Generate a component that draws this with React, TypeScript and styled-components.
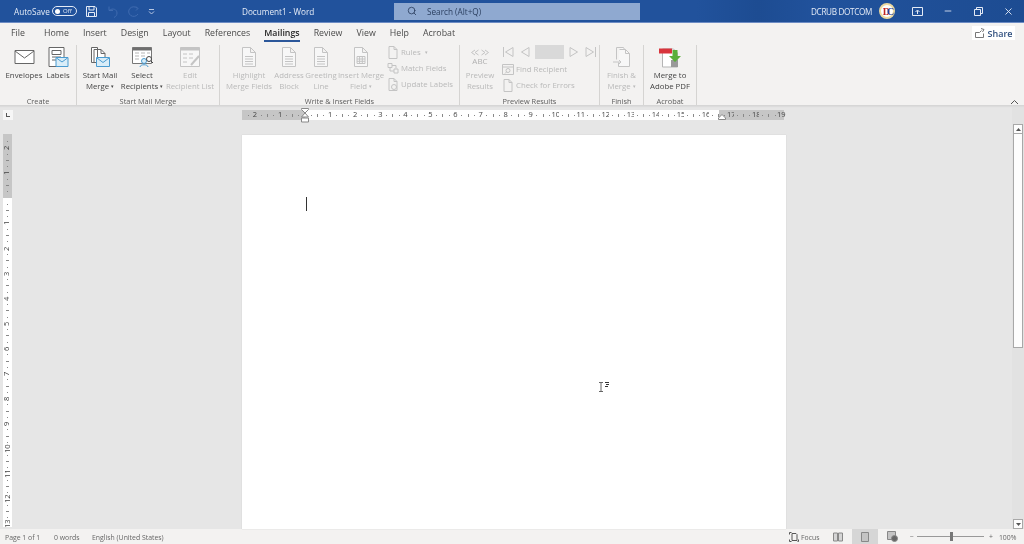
import React from "react";
import styled, { createGlobalStyle } from "styled-components";
import { Minus, Search, X } from "lucide-react";

const GlobalStyle = createGlobalStyle`
  html, body {
    margin: 0;
    padding: 0;
    overflow: hidden;
  }
  body {
    font-family: "Open Sans", "Noto Sans", sans-serif;
    color: #444;
  }
`;

const Window = styled.div`
  display: flex;
  flex-direction: column;
  width: 1024px;
  height: 544px;
  overflow: hidden;
  background: #e6e6e6;
  filter: blur(0.35px);
`;

/* title bar */

const TitleBar = styled.div`
  display: flex;
  align-items: center;
  flex: none;
  height: 22px;
  padding-left: 14px;
  border-bottom: 1px solid #6d8cc4;
  background: linear-gradient(90deg, #21529c 0%, #21529c 68%, #1d4c92 74%, #21529c 80%, #1d4c92 100%);
  color: #e4ebf6;
  font-size: 8.2px;
`;

const AutoSave = styled.span`
  width: 38px;
`;

const Toggle = styled.div`
  display: flex;
  align-items: center;
  gap: 3px;
  box-sizing: border-box;
  width: 25px;
  height: 10px;
  padding-left: 2px;
  border: 1px solid #e4ebf6;
  border-radius: 5px;
  font-size: 6px;

  i {
    width: 5px;
    height: 5px;
    border-radius: 50%;
    background: #fff;
  }
`;

const QuickIcons = styled.div`
  display: flex;
  align-items: center;
  width: 157px;
  margin-left: 8px;
  gap: 8px;
`;

const DocTitle = styled.span`
  width: 152px;
`;

const SearchBox = styled.div`
  display: flex;
  align-items: center;
  gap: 10px;
  box-sizing: border-box;
  width: 246px;
  height: 17px;
  padding-left: 13px;
  background: #8fa9d0;
  color: #2b3f5f;
`;

const Account = styled.div`
  width: 68px;
  margin-left: 171px;
  letter-spacing: -0.35px;
`;

const Avatar = styled.div`
  display: flex;
  align-items: center;
  justify-content: center;
  flex: none;
  box-sizing: border-box;
  width: 16px;
  height: 16px;
  border: 2px solid #ecd9a0;
  border-radius: 50%;
  background: #fff;
  color: #c0241f;
  font-family: "Liberation Serif", serif;
  font-size: 10px;
  font-weight: 700;
  letter-spacing: -3px;

  b {
    color: #1d3f9c;
  }
`;

const WindowControls = styled.div`
  display: flex;
  align-items: center;
  margin-left: 7px;
`;

const WindowControl = styled.div`
  display: flex;
  align-items: center;
  justify-content: center;
  width: 30.5px;
  color: #e4ebf6;
`;

/* tabs */

const TabBar = styled.div`
  display: flex;
  align-items: center;
  flex: none;
  gap: 14.1px;
  height: 20px;
  padding-left: 11px;
  background: #f3f2f1;
  font-size: 8.8px;
`;

const Tab = styled.span<{ $active?: boolean }>`
  position: relative;
  color: ${(p) => (p.$active ? "#262626" : "#4a4a4a")};
  font-weight: ${(p) => (p.$active ? 600 : 400)};

  &:first-child {
    margin-right: 5px;
  }

  &::after {
    content: "";
    display: ${(p) => (p.$active ? "block" : "none")};
    position: absolute;
    left: 0;
    right: 0;
    bottom: -3px;
    height: 2px;
    background: #2b579a;
  }
`;

const ShareButton = styled.div`
  display: flex;
  align-items: center;
  justify-content: center;
  gap: 3px;
  width: 43px;
  height: 14px;
  margin-left: auto;
  margin-right: 9px;
  background: #fff;
  color: #2f4f7f;
  font-size: 9px;
  font-weight: 600;
`;

/* ribbon */

const Ribbon = styled.div`
  position: relative;
  display: flex;
  flex: none;
  box-sizing: border-box;
  height: 63px;
  padding-top: 2px;
  border-bottom: 1px solid #d6d6d6;
  background: #f3f2f1;
  box-shadow: 0 1px 1px #dcdcdc;
`;

const Group = styled.div<{ $w: number }>`
  display: flex;
  flex-direction: column;
  box-sizing: border-box;
  width: ${(p) => p.$w}px;
  border-right: 1px solid #d5d4d2;
`;

const GroupBody = styled.div<{ $pad?: number }>`
  display: flex;
  flex: 1;
  min-height: 0;
  padding-left: ${(p) => p.$pad ?? 0}px;
`;

const GroupLabel = styled.div`
  height: 8px;
  text-align: center;
  color: #5c5c5c;
  font-size: 7.4px;
  line-height: 8px;
`;

const BigButton = styled.div<{ $w: number; $off?: boolean }>`
  display: flex;
  flex-direction: column;
  align-items: center;
  flex: none;
  width: ${(p) => p.$w}px;
  padding-top: 1px;
  color: ${(p) => (p.$off ? "#b9b9b9" : "#444")};
  font-size: 7.8px;
  line-height: 11px;
  text-align: center;
  white-space: nowrap;

  svg {
    display: block;
    height: 22px;
    margin-bottom: 2px;
  }
`;

const Caret = styled.span`
  display: inline-block;
  margin-left: 2px;
  font-size: 5px;
  vertical-align: 1px;
`;

const SmallColumn = styled.div<{ $indent?: number }>`
  display: flex;
  flex-direction: column;
  margin-top: -1px;
  margin-left: 3px;

  > div:not(:first-child) {
    padding-left: ${(p) => p.$indent ?? 0}px;
  }
`;

const SmallItem = styled.div`
  display: flex;
  align-items: center;
  gap: 2px;
  height: 16px;
  color: #b9b9b9;
  font-size: 7.8px;
  white-space: nowrap;
`;

const NavRow = styled.div`
  display: flex;
  align-items: center;
  gap: 5px;
  height: 15px;
  margin-bottom: 2px;
  margin-left: 3px;
`;

const NavField = styled.div`
  width: 29px;
  height: 14px;
  background: #d9d9d9;
`;

const PreviewGlyph = styled.div`
  display: flex;
  flex-direction: column;
  align-items: center;
  box-sizing: border-box;
  height: 24px;
  padding-top: 3px;
  color: #b0b0b0;
  font-size: 8px;
  line-height: 9px;

  svg {
    height: 7px;
    margin: 0;
  }
`;

const Collapse = styled.div`
  position: absolute;
  right: 5px;
  bottom: 0;
  line-height: 0;
`;

/* workspace */

const Workspace = styled.div`
  display: flex;
  flex: 1;
  min-height: 0;
`;

const LeftRail = styled.div`
  display: flex;
  flex-direction: column;
  flex: none;
  box-sizing: border-box;
  width: 16px;
  padding-left: 3px;
`;

const TabStop = styled.div`
  display: flex;
  align-items: center;
  justify-content: center;
  width: 10px;
  height: 10px;
  margin-top: 4px;
  margin-bottom: 14px;
  background: #f6f6f6;

  &::before {
    content: "";
    width: 3px;
    height: 3px;
    border-left: 1px solid #555;
    border-bottom: 1px solid #555;
  }
`;

const VerticalRuler = styled.div`
  display: flex;
  flex-direction: column;
  width: 9px;
  overflow: hidden;
`;

const RulerLead = styled.div<{ $size: number; $vertical?: boolean }>`
  flex: none;
  width: ${(p) => (p.$vertical ? "9px" : `${p.$size}px`)};
  height: ${(p) => (p.$vertical ? `${p.$size}px` : "10px")};
  background: #c6c6c6;
`;

const Center = styled.div`
  display: flex;
  flex-direction: column;
  flex: 1;
  min-width: 0;
  padding-left: 226px;
`;

const HorizontalRuler = styled.div`
  position: relative;
  display: flex;
  flex: none;
  width: 544px;
  height: 10px;
  margin-top: 4px;
`;

type Tone = "margin" | "text" | "start" | "end";

const toneBackground = (tone: Tone, vertical?: boolean) => {
  const grey = "#c6c6c6";
  if (tone === "margin") return grey;
  if (tone === "text") return "#fff";
  const dir = vertical ? "180deg" : "90deg";
  return tone === "start"
    ? `linear-gradient(${dir}, ${grey} 50%, #fff 50%)`
    : `linear-gradient(${dir}, #fff 50%, ${grey} 50%)`;
};

const Slot = styled.div<{ $tone: Tone; $vertical?: boolean }>`
  display: flex;
  align-items: center;
  justify-content: center;
  flex: none;
  width: ${(p) => (p.$vertical ? "9px" : "6.28px")};
  height: ${(p) => (p.$vertical ? "6.28px" : "10px")};
  background: ${(p) => toneBackground(p.$tone, p.$vertical)};
  color: #444;
  font-size: 7.5px;
  line-height: 1;
`;

const SlotLabel = styled.span<{ $vertical?: boolean }>`
  white-space: nowrap;
  transform: ${(p) => (p.$vertical ? "rotate(-90deg)" : "none")};
`;

const Dot = styled.i`
  width: 1px;
  height: 1px;
  background: #888;
`;

const Tick = styled.i<{ $vertical?: boolean }>`
  width: ${(p) => (p.$vertical ? "3px" : "1px")};
  height: ${(p) => (p.$vertical ? "1px" : "3px")};
  background: #888;
`;

const IndentMarker = styled.svg<{ $left: number; $top: number }>`
  position: absolute;
  left: ${(p) => p.$left}px;
  top: ${(p) => p.$top}px;
`;

const Page = styled.div`
  position: relative;
  flex: 1;
  box-sizing: border-box;
  width: 544px;
  margin-top: 15px;
  padding: 62px 0 0 64px;
  background: #fff;
  box-shadow: 0 0 1px #c4c4c4;
`;

const TextCaret = styled.div`
  width: 1px;
  height: 14px;
  background: #333;
`;

const MouseCursor = styled.svg`
  position: absolute;
  left: 355px;
  top: 246px;
`;

const ScrollBar = styled.div`
  display: flex;
  flex-direction: column;
  flex: none;
  box-sizing: border-box;
  width: 12px;
  padding: 18px 1px 0;
  background: #e2e2e2;
`;

const ScrollButton = styled.div`
  display: flex;
  align-items: center;
  justify-content: center;
  flex: none;
  box-sizing: border-box;
  height: 10px;
  border: 1px solid #a8a8a8;
  background: #fdfdfd;
`;

const ScrollThumb = styled.div`
  flex: none;
  box-sizing: border-box;
  height: 214px;
  border: 1px solid #a8a8a8;
  border-top: none;
  background: #fdfdfd;
`;

const ScrollTrack = styled.div`
  flex: 1;
`;

/* status bar */

const StatusBar = styled.div`
  display: flex;
  align-items: center;
  flex: none;
  box-sizing: border-box;
  height: 15px;
  padding-left: 5px;
  background: #f3f2f1;
  color: #666;
  font-size: 6.9px;
`;

const StatusText = styled.span<{ $w: number }>`
  width: ${(p) => p.$w}px;
  padding-top: 1px;
  white-space: nowrap;
`;

const FocusLabel = styled.span`
  display: flex;
  align-items: center;
  gap: 2px;
  width: 35px;
  padding-top: 1px;
`;

const ViewButton = styled.div<{ $active?: boolean; $w: number }>`
  display: flex;
  align-items: center;
  justify-content: center;
  height: 15px;
  width: ${(p) => p.$w}px;
  background: ${(p) => (p.$active ? "#d6d6d6" : "transparent")};
`;

const ZoomMinus = styled.span`
  margin-left: 4px;
`;

const ZoomSlider = styled.div`
  position: relative;
  width: 67px;
  height: 1px;
  margin: 0 5px 0 3px;
  background: #999;

  &::after {
    content: "";
    position: absolute;
    left: 33px;
    top: -4px;
    width: 3px;
    height: 9px;
    background: #777;
  }
`;

const ZoomValue = styled.span`
  margin-left: 6px;
  padding-top: 1px;
`;

/* icons */

const off = "#c4c4c4";
const blue = "#4a9bd0";

const Doc = () => (
  <svg viewBox="0 0 18 22" width="18" height="22" fill="none" stroke={off}>
    <path d="M2.500 1.500h8l5 5v14h-13zM10.500 1.500v5h5" fill="#f7f7f7" />
    <path d="M5 10.500h8M5 13h8M5 15.500h8M5 18h8" />
  </svg>
);

const EnvelopeIcon = () => (
  <svg viewBox="0 0 24 22" width="24" height="22" fill="none" stroke="#666">
    <path d="M3 4.500h19v13H3z" fill="#fff" />
    <path d="M3 5l9.500 7L22 5" />
  </svg>
);

const LabelsIcon = () => (
  <svg viewBox="0 0 22 22" width="22" height="22" fill="none" stroke="#666">
    <path d="M2 1.500h15v19H2z" fill="#fff" />
    <path d="M5 4.500h9v4H5zM5 11h9M5 14h5" />
    <path d="M9 11.500h12v9H9z" fill="#d9edf8" stroke={blue} />
    <path d="M9.500 12l5.500 4 5.500-4" stroke={blue} />
  </svg>
);

const StartMergeIcon = () => (
  <svg viewBox="0 0 22 22" width="22" height="22" fill="none" stroke="#666">
    <path d="M2.500 1.500h6v15h-6zM5 3.500h7l4 4v9H5z" fill="#fff" />
    <path d="M12 3.500v4h4" />
    <path d="M7.500 11.500h13v9h-13z" fill="#d9edf8" stroke={blue} />
    <path d="M8 12l6 4.500 6-4.500" stroke={blue} />
  </svg>
);

const SelectRecipientsIcon = () => (
  <svg viewBox="0 0 24 22" width="24" height="22" fill="none" stroke="#777">
    <path d="M2.500 1.500h19v16h-19z" fill="#fff" />
    <path d="M2.500 2h19v2h-19z" fill="#666" />
    <path d="M5 7h4M11 7h4M17 7h3M5 10h4M11 10h4M5 13h4" stroke="#b5b5b5" />
    <circle cx="14" cy="15" r="2.500" fill="#d9edf8" stroke={blue} />
    <path d="M10 21c0-3 8-3 8 0" stroke={blue} />
    <circle cx="19" cy="13" r="2.500" fill="#fff" stroke="#444" />
    <path d="M21 15l2 2" stroke="#444" />
  </svg>
);

const EditListIcon = () => (
  <svg viewBox="0 0 22 22" width="22" height="22" fill="none" stroke={off}>
    <path d="M1.500 1.500h19v19h-19z" fill="#f7f7f7" />
    <path d="M1.500 2h19v2h-19z" fill={off} />
    <path d="M4 8h4M10 8h4M4 12h4M10 12h4M4 16h4" />
    <path d="M12 19l8-9" strokeWidth="2" />
  </svg>
);

const InsertFieldIcon = () => (
  <svg viewBox="0 0 18 22" width="18" height="22" fill="none" stroke={off}>
    <path d="M2.500 1.500h8l5 5v14h-13zM10.500 1.500v5h5" fill="#f7f7f7" />
    <path d="M5 10.500h8v7H5zM5 13h8M5 15.300h8M7.600 10.500v7M10.300 10.500v7" />
  </svg>
);

const SmallDoc = () => (
  <svg viewBox="0 0 12 13" width="12" height="13" fill="none" stroke={off}>
    <path d="M2 .5h5l3 3v9H2zM7 .5v3h3" />
  </svg>
);

const MatchIcon = () => (
  <svg viewBox="0 0 12 13" width="12" height="13" fill="none" stroke={off}>
    <path d="M1 1.500h4v4H1zM7 7h4v4H7zM5 3.500h4v3M7 9H3V5.500" />
  </svg>
);

const UpdateIcon = () => (
  <svg viewBox="0 0 12 13" width="12" height="13" fill="none" stroke={off}>
    <path d="M2 .5h5l3 3v9H2zM7 .5v3h3" />
    <circle cx="7" cy="9" r="2.500" fill="#f3f2f1" />
  </svg>
);

const FindIcon = () => (
  <svg viewBox="0 0 12 13" width="12" height="13" fill="none" stroke={off}>
    <path d="M.5 1.500h11v10H.5zM.5 4h11" />
    <circle cx="6" cy="7.500" r="2" />
    <path d="M4.500 9L3 10.500" />
  </svg>
);

const PreviewArrows = () => (
  <svg viewBox="0 0 20 7" width="20" height="7" fill="none" stroke={off}>
    <path d="M5 1L1.500 3.500 5 6M8.500 1L5 3.500 8.500 6M11.500 1L15 3.500 11.500 6M15 1l3.500 2.500L15 6" />
  </svg>
);

const NavArrow = ({ d, w = 11 }: { d: string; w?: number }) => (
  <svg viewBox={`0 0 ${w} 12`} width={w} height="12" fill="none" stroke={off}>
    <path d={d} />
  </svg>
);

const FinishIcon = () => (
  <svg viewBox="0 0 20 22" width="20" height="22" fill="none" stroke={off}>
    <path d="M4.500 1.500h7l1 2M7.500 3.500h6l4 4v13h-11v-4" fill="#f7f7f7" />
    <path d="M4.500 1.500v12M13.500 3.500v4h4M1 16h8M7 14l2 2-2 2" />
  </svg>
);

const AdobeIcon = () => (
  <svg viewBox="0 0 24 22" width="24" height="22">
    <path d="M4.500 3h11l4 4v14h-15z" fill="#fff" stroke="#b5b5b5" />
    <path d="M1 2.500h13v5H1z" fill="#d8343c" />
    <path d="M13 14h7v7h-7z" fill="#9a9a9a" />
    <path d="M14.500 4h5v6h3.500l-6 6-6-6h3.500z" fill="#5aaf3a" />
  </svg>
);

const SaveIcon = () => (
  <svg viewBox="0 0 13 13" width="13" height="13" fill="none" stroke="#e4ebf6">
    <path d="M1.500 1.500h8.500l1.500 1.500v8.500h-10zM4 1.500v3.500h5v-3.500M3.500 11.500v-4h6v4" />
  </svg>
);

const UndoIcon = () => (
  <svg viewBox="0 0 13 13" width="13" height="13" fill="none" stroke="#3f6bb0">
    <path d="M3 1.500v4h4M3 5.500c4-3 8-1 8 2.500 0 2-1 3.500-3 4.500" />
  </svg>
);

const RedoIcon = () => (
  <svg viewBox="0 0 13 13" width="13" height="13" fill="none" stroke="#3f6bb0">
    <path d="M9 1.500l2 2-2 2M10.500 3.500A5 4.800 0 1 0 11 9" />
  </svg>
);

const QatIcon = () => (
  <svg viewBox="0 0 7 7" width="7" height="7" fill="none" stroke="#b8c7e2">
    <path d="M1 1.500h5M1 3.500l2.500 2.500L6 3.500" />
  </svg>
);

const RibbonDisplayIcon = () => (
  <svg viewBox="0 0 11 9" width="11" height="9" fill="none" stroke="#e4ebf6">
    <path d="M.5.500h10v8H.5z" />
    <path d="M5.500 7V3.500M3.500 5l2-2 2 2" />
  </svg>
);

const RestoreIcon = () => (
  <svg viewBox="0 0 9 9" width="9" height="9" fill="none" stroke="#e4ebf6">
    <path d="M.5 2.500h6v6h-6zM2.500 2.500v-2h6v6h-2" />
  </svg>
);

const ShareIcon = () => (
  <svg viewBox="0 0 10 10" width="10" height="10" fill="none" stroke="#777">
    <path d="M.5 4.500h4l2-2M.5 4.500v5h8v-4M6 .5l3 1-1.500 2.500" />
  </svg>
);

const FocusIcon = () => (
  <svg viewBox="0 0 10 10" width="10" height="10" fill="none" stroke="#555">
    <path d="M3 1.500h4l1 1v6H3zM.5 2.500v-2h2M9.500 7.500v2h-1M.5 7.500v2h2" />
  </svg>
);

const ReadIcon = () => (
  <svg viewBox="0 0 10 10" width="10" height="10" fill="#d5d5d5" stroke="#888">
    <path d="M.5 1h4v8h-4zM5.500 1h4v8h-4z" />
  </svg>
);

const PrintIcon = () => (
  <svg viewBox="0 0 8 10" width="8" height="10" fill="#c4c4c4" stroke="#888">
    <path d="M.5.500h7v9h-7z" />
  </svg>
);

const WebIcon = () => (
  <svg viewBox="0 0 11 11" width="11" height="11" fill="#c4c4c4" stroke="#888">
    <path d="M.5.500h8v8h-8z" />
    <circle cx="7.500" cy="7.500" r="3" fill="#666" />
  </svg>
);

/* rulers: each slot is a quarter of a unit, the pattern is dot, number, dot, tick */

const rulerCell = (i: number, vertical?: boolean) => {
  const phase = i % 4;
  if (phase === 1) {
    const label = Math.abs(2 - (i - 1) / 4);
    if (label === 0) return null;
    return <SlotLabel $vertical={vertical}>{label}</SlotLabel>;
  }
  return phase === 3 ? <Tick $vertical={vertical} /> : <Dot />;
};

const topTone = (i: number): Tone => {
  if (i < 9 || i > 75) return "margin";
  if (i === 9) return "start";
  return i === 75 ? "end" : "text";
};

const sideTone = (i: number): Tone => {
  if (i < 9) return "margin";
  return i === 9 ? "start" : "text";
};

const TOP_SLOTS = Array.from({ length: 86 }, (_, i) => i);
const SIDE_SLOTS = Array.from({ length: 62 }, (_, i) => i);

const tabs = ["File", "Home", "Insert", "Design", "Layout", "References", "Mailings", "Review", "View", "Help", "Acrobat"];

const App: React.FC = () => {
  return (
    <Window>
      <GlobalStyle />
      <TitleBar>
        <AutoSave>AutoSave</AutoSave>
        <Toggle>
          <i />
          Off
        </Toggle>
        <QuickIcons>
          <SaveIcon />
          <UndoIcon />
          <RedoIcon />
          <QatIcon />
        </QuickIcons>
        <DocTitle>Document1 - Word</DocTitle>
        <SearchBox>
          <Search size={10} color="#2b3f5f" />
          Search (Alt+Q)
        </SearchBox>
        <Account>DCRUB DOTCOM</Account>
        <Avatar>
          D<b>C</b>
        </Avatar>
        <WindowControls>
          <WindowControl>
            <RibbonDisplayIcon />
          </WindowControl>
          <WindowControl>
            <Minus size={10} />
          </WindowControl>
          <WindowControl>
            <RestoreIcon />
          </WindowControl>
          <WindowControl>
            <X size={11} />
          </WindowControl>
        </WindowControls>
      </TitleBar>

      <TabBar>
        {tabs.map((t) => (
          <Tab key={t} $active={t === "Mailings"}>
            {t}
          </Tab>
        ))}
        <ShareButton>
          <ShareIcon />
          Share
        </ShareButton>
      </TabBar>

      <Ribbon>
        <Group $w={77}>
          <GroupBody $pad={5}>
            <BigButton $w={38}>
              <EnvelopeIcon />
              Envelopes
            </BigButton>
            <BigButton $w={30}>
              <LabelsIcon />
              Labels
            </BigButton>
          </GroupBody>
          <GroupLabel>Create</GroupLabel>
        </Group>

        <Group $w={143}>
          <GroupBody $pad={3}>
            <BigButton $w={40}>
              <StartMergeIcon />
              Start Mail
              <span>
                Merge<Caret>▾</Caret>
              </span>
            </BigButton>
            <BigButton $w={44}>
              <SelectRecipientsIcon />
              Select
              <span>
                Recipients<Caret>▾</Caret>
              </span>
            </BigButton>
            <BigButton $w={52} $off>
              <EditListIcon />
              Edit
              <span>Recipient List</span>
            </BigButton>
          </GroupBody>
          <GroupLabel>Start Mail Merge</GroupLabel>
        </Group>

        <Group $w={240}>
          <GroupBody $pad={4}>
            <BigButton $w={50} $off>
              <Doc />
              Highlight
              <span>Merge Fields</span>
            </BigButton>
            <BigButton $w={30} $off>
              <Doc />
              Address
              <span>Block</span>
            </BigButton>
            <BigButton $w={34} $off>
              <Doc />
              Greeting
              <span>Line</span>
            </BigButton>
            <BigButton $w={46} $off>
              <InsertFieldIcon />
              Insert Merge
              <span>
                Field<Caret>▾</Caret>
              </span>
            </BigButton>
            <SmallColumn>
              <SmallItem>
                <SmallDoc />
                Rules<Caret>▾</Caret>
              </SmallItem>
              <SmallItem>
                <MatchIcon />
                Match Fields
              </SmallItem>
              <SmallItem>
                <UpdateIcon />
                Update Labels
              </SmallItem>
            </SmallColumn>
          </GroupBody>
          <GroupLabel>Write &amp; Insert Fields</GroupLabel>
        </Group>

        <Group $w={140}>
          <GroupBody $pad={4}>
            <BigButton $w={32} $off>
              <PreviewGlyph>
                <PreviewArrows />
                ABC
              </PreviewGlyph>
              Preview
              <span>Results</span>
            </BigButton>
            <SmallColumn $indent={3}>
              <NavRow>
                <NavArrow w={12} d="M1.500 1v10M11 1.500L3.500 6l7.500 4.500z" />
                <NavArrow d="M10 1.500L2.500 6l7.500 4.500z" />
                <NavField />
                <NavArrow d="M1 1.500L8.500 6 1 10.500z" />
                <NavArrow w={12} d="M1 1.500L8.500 6 1 10.500zM10.500 1v10" />
              </NavRow>
              <SmallItem>
                <FindIcon />
                Find Recipient
              </SmallItem>
              <SmallItem>
                <SmallDoc />
                Check for Errors
              </SmallItem>
            </SmallColumn>
          </GroupBody>
          <GroupLabel>Preview Results</GroupLabel>
        </Group>

        <Group $w={44}>
          <GroupBody>
            <BigButton $w={43} $off>
              <FinishIcon />
              Finish &amp;
              <span>
                Merge<Caret>▾</Caret>
              </span>
            </BigButton>
          </GroupBody>
          <GroupLabel>Finish</GroupLabel>
        </Group>

        <Group $w={53}>
          <GroupBody>
            <BigButton $w={52}>
              <AdobeIcon />
              Merge to
              <span>Adobe PDF</span>
            </BigButton>
          </GroupBody>
          <GroupLabel>Acrobat</GroupLabel>
        </Group>

        <Collapse>
          <svg viewBox="0 0 9 6" width="9" height="6" fill="none" stroke="#555">
            <path d="M1 5l3.500-3.500L8 5" />
          </svg>
        </Collapse>
      </Ribbon>

      <Workspace>
        <LeftRail>
          <TabStop />
          <VerticalRuler>
            <RulerLead $vertical $size={4.6} />
            {SIDE_SLOTS.map((i) => (
              <Slot key={i} $vertical $tone={sideTone(i)}>
                {rulerCell(i, true)}
              </Slot>
            ))}
          </VerticalRuler>
        </LeftRail>

        <Center>
          <HorizontalRuler>
            <RulerLead $size={3.6} />
            {TOP_SLOTS.map((i) => (
              <Slot key={i} $tone={topTone(i)}>
                {rulerCell(i)}
              </Slot>
            ))}
            <IndentMarker $left={59} $top={-2} width="8" height="15" viewBox="0 0 8 15" fill="#fff" stroke="#888">
              <path d="M.5.500h7v1L4 5 .5 1.500zM4 5l3.500 4H.5zM.5 10h7v4h-7z" />
            </IndentMarker>
            <IndentMarker $left={476} $top={4} width="8" height="6" viewBox="0 0 8 6" fill="#fff" stroke="#888">
              <path d="M4 .5L7.500 4v1.500h-7V4z" />
            </IndentMarker>
          </HorizontalRuler>
          <Page>
            <TextCaret />
            <MouseCursor width="14" height="12" viewBox="0 0 14 12" fill="none" stroke="#666">
              <path d="M2 1.500h4M2 10.500h4M4 1.500v9" />
              <path d="M8 1.500h4M9 3.500h3M8 5.500h3" stroke="#333" />
            </MouseCursor>
          </Page>
        </Center>

        <ScrollBar>
          <ScrollButton>
            <svg viewBox="0 0 5 3" width="5" height="3" fill="#555">
              <path d="M2.500 0L5 3H0z" />
            </svg>
          </ScrollButton>
          <ScrollThumb />
          <ScrollTrack />
          <ScrollButton>
            <svg viewBox="0 0 5 3" width="5" height="3" fill="#555">
              <path d="M0 0h5L2.500 3z" />
            </svg>
          </ScrollButton>
        </ScrollBar>
      </Workspace>

      <StatusBar>
        <StatusText $w={49}>Page 1 of 1</StatusText>
        <StatusText $w={38}>0 words</StatusText>
        <StatusText $w={697}>English (United States)</StatusText>
        <FocusLabel>
          <FocusIcon />
          Focus
        </FocusLabel>
        <ViewButton $w={28}>
          <ReadIcon />
        </ViewButton>
        <ViewButton $w={26} $active>
          <PrintIcon />
        </ViewButton>
        <ViewButton $w={28}>
          <WebIcon />
        </ViewButton>
        <ZoomMinus>−</ZoomMinus>
        <ZoomSlider />
        <span>+</span>
        <ZoomValue>100%</ZoomValue>
      </StatusBar>
    </Window>
  );
};

export default App;
